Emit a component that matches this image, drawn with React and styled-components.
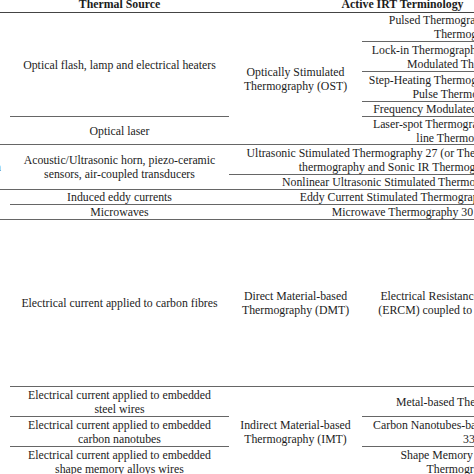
import React from "react";
import styled, { createGlobalStyle } from "styled-components";

const Global = createGlobalStyle`
  html, body { margin: 0; padding: 0; background: #ffffff; }
  body { font-family: "Liberation Serif", "Times New Roman", serif; }
`;

const Viewport = styled.div`
  width: 474px;
  height: 474px;
  overflow: hidden;
  background: #ffffff;
`;

const Table = styled.div`
  display: grid;
  grid-template-columns: 110px 219px 133px 214px;
  grid-template-rows: 19px 29px 30px 30px 15px 28px 30px 15px 15px 15px 167px 30px 30px 30px;
  margin-left: -100px;
  margin-top: -6px;
  width: 676px;
  color: #1c1c1c;
  font-size: 11.8px;
  line-height: 14px;
`;

const Cell = styled.div`
  grid-row: ${(p) => p.$row} / span ${(p) => p.$rs || 1};
  grid-column: ${(p) => p.$col} / span ${(p) => p.$cs || 1};
  display: flex;
  align-items: ${(p) => (p.$head ? "flex-end" : "center")};
  justify-content: ${(p) => (p.$align === "end" ? "flex-end" : "center")};
  padding-right: ${(p) => (p.$align === "end" ? "9px" : "0")};
  padding-bottom: ${(p) => (p.$head ? "1px" : "0")};
  text-align: center;
  white-space: nowrap;
  font-weight: ${(p) => (p.$head ? 700 : 400)};
  border-bottom: 1px solid ${(p) => (p.$head ? "#444444" : "#666666")};
  box-sizing: border-box;
`;

const Lines = ({ lines }) =>
  lines.map((l, i) => (
    <React.Fragment key={i}>
      {i > 0 && <br />}
      {l}
    </React.Fragment>
  ));

const cells = [
  // header
  { row: 1, col: 1, head: true, t: ["Stimulation"] },
  { row: 1, col: 2, head: true, t: ["Thermal Source"] },
  { row: 1, col: 3, cs: 2, head: true, t: ["Active IRT Terminology"] },
  // optical
  { row: 2, col: 1, rs: 5, t: ["Optical"] },
  { row: 2, col: 2, rs: 4, t: ["Optical flash, lamp and electrical heaters"] },
  { row: 2, col: 3, rs: 5, t: ["Optically Stimulated", "Thermography (OST)"] },
  { row: 2, col: 4, t: ["Pulsed Thermography 24 or Flash", "Thermography"] },
  { row: 3, col: 4, t: ["Lock-in Thermography (LIT) or Periodic", "Modulated Thermography"] },
  { row: 4, col: 4, t: ["Step-Heating Thermography (ST) or Long", "Pulse Thermography 26"] },
  { row: 5, col: 4, t: ["Frequency Modulated Thermography 25"] },
  { row: 6, col: 2, t: ["Optical laser"] },
  { row: 6, col: 4, t: ["Laser-spot Thermography (LT) or Laser-", "line Thermography 26"] },
  // acoustic
  { row: 7, col: 1, rs: 2, align: "end", t: ["Vibration"] },
  { row: 7, col: 2, rs: 2, t: ["Acoustic/Ultrasonic horn, piezo-ceramic", "sensors, air-coupled transducers"] },
  { row: 7, col: 3, cs: 2, t: ["Ultrasonic Stimulated Thermography 27 (or Thermosonics, vibro-", "thermography and Sonic IR Thermography)"] },
  { row: 8, col: 3, cs: 2, t: ["Nonlinear Ultrasonic Stimulated Thermography 28"] },
  // electromagnetic
  { row: 9, col: 1, rs: 2, t: ["Electromagnetic"] },
  { row: 9, col: 2, t: ["Induced eddy currents"] },
  { row: 9, col: 3, cs: 2, t: ["Eddy Current Stimulated Thermography 29"] },
  { row: 10, col: 2, t: ["Microwaves"] },
  { row: 10, col: 3, cs: 2, t: ["Microwave Thermography 30"] },
  // electrical
  { row: 11, col: 1, rs: 4, t: ["Electrical"] },
  { row: 11, col: 2, t: ["Electrical current applied to carbon fibres"] },
  { row: 11, col: 3, t: ["Direct Material-based", "Thermography (DMT)"] },
  { row: 11, col: 4, t: ["Electrical Resistance Change Method", "(ERCM) coupled to Thermography 31"] },
  { row: 12, col: 2, t: ["Electrical current applied to embedded", "steel wires"] },
  { row: 12, col: 3, rs: 3, t: ["Indirect Material-based", "Thermography (IMT)"] },
  { row: 12, col: 4, t: ["Metal-based Thermography 32"] },
  { row: 13, col: 2, t: ["Electrical current applied to embedded", "carbon nanotubes"] },
  { row: 13, col: 4, t: ["Carbon Nanotubes-based Thermography", "33"] },
  { row: 14, col: 2, t: ["Electrical current applied to embedded", "shape memory alloys wires"] },
  { row: 14, col: 4, t: ["Shape Memory Alloys-based", "Thermography 34"] },
];

export default function App() {
  return (
    <>
      <Global />
      <Viewport>
        <Table>
          {cells.map((c, i) => (
            <Cell
              key={i}
              $row={c.row}
              $col={c.col}
              $rs={c.rs}
              $cs={c.cs}
              $head={c.head}
              $align={c.align}
            >
              <span>
                <Lines lines={c.t} />
              </span>
            </Cell>
          ))}
        </Table>
      </Viewport>
    </>
  );
}
